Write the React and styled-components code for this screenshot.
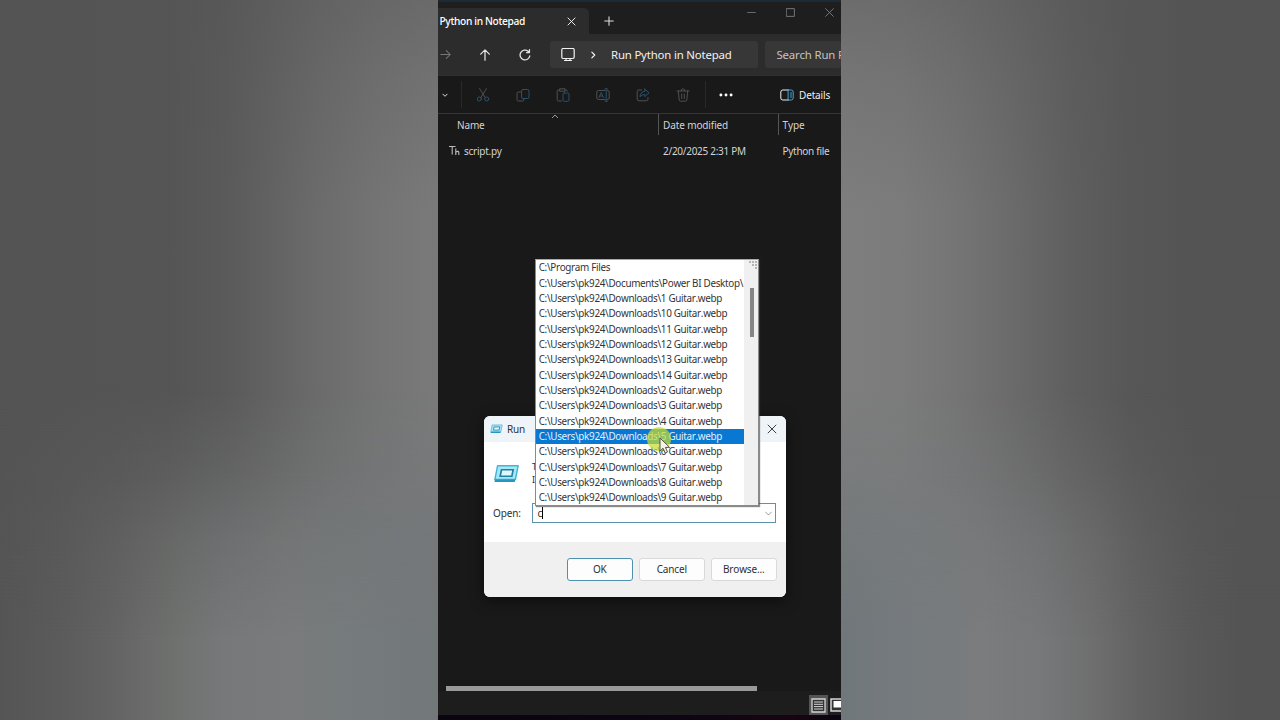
import React from 'react';
import styled, { createGlobalStyle, css } from 'styled-components';

const Global = createGlobalStyle`
  * { box-sizing: border-box; }
  body { margin: 0; background: #555; font-family: 'Noto Sans', 'Open Sans', sans-serif; font-size: 10px; font-kerning: none; overflow: hidden; }
`;

const Stage = styled.div`
  width: 1280px;
  height: 720px;
  display: flex;
  overflow: hidden;
`;

const Backdrop = styled.div`
  width: ${(p) => (p.$side === 'left' ? 438 : 439)}px;
  flex: none;
  display: flex;
  background: linear-gradient(to bottom, rgba(85, 85, 85, 0.42), rgba(85, 85, 85, 0.22) 80px, rgba(85, 85, 85, 0) 210px),
    ${(p) =>
      p.$side === 'left'
        ? 'linear-gradient(to right, #545454 0, #555 170px, #5a5a5a 225px, #616161 265px, #6b6b6b 315px, #747474 375px, #7a7a7a 438px)'
        : 'linear-gradient(to right, #7e7e7e 0, #7c7c7c 60px, #757575 115px, #6b6b6b 170px, #5f5f5f 230px, #575757 290px, #545454 350px)'};
  &::before {
    content: '';
    flex: 1;
    background: ${(p) =>
      p.$side === 'left'
        ? 'linear-gradient(to right, #555 0, #5b5b5b 60px, #646464 115px, #6f716f 175px, #77787a 225px, #7a7b7c 285px, #767b7d 340px, #72777a 438px)'
        : 'linear-gradient(to right, #70777a 0, #767b7e 80px, #7a7c7e 140px, #77787a 200px, #6f6f6f 250px, #626262 300px, #595959 350px, #545454 400px)'};
    mask-image: linear-gradient(to bottom, transparent 390px, rgba(0, 0, 0, 0.3) 470px, rgba(0, 0, 0, 0.7) 540px, #000 640px);
  }
`;

const Screen = styled.main`
  position: relative;
  width: 403px;
  height: 720px;
  flex: none;
  display: flex;
  flex-direction: column;
  overflow: hidden;
  background: #191919;
  color: #dedede;
  white-space: nowrap;
`;

const TitleBar = styled.header`
  height: 34px;
  flex: none;
  display: flex;
  align-items: flex-end;
  background: #1e1e1e;
  border-top: 2px solid #1b2a35;
`;

const Tab = styled.div`
  width: 151px;
  height: 26px;
  display: flex;
  align-items: center;
  justify-content: space-between;
  padding: 0 13px 0 1.5px;
  background: #2c2c2c;
  border-radius: 0 5px 0 0;
  color: #fff;
  font-size: 10.2px;
  font-weight: 500;
  letter-spacing: -0.34px;
`;

const NewTab = styled.div`
  width: 39px;
  height: 26px;
  display: flex;
  align-items: center;
  justify-content: center;
  color: #ddd;
`;

const WindowControls = styled.div`
  margin-left: auto;
  height: 32px;
  display: flex;
  gap: 30px;
  padding: 6px 7px 0 0;
  color: #808080;
`;

const NavBar = styled.nav`
  height: 41px;
  flex: none;
  display: flex;
  align-items: center;
  background: #2c2c2c;
  color: #e0e0e0;
`;

const NavSlot = styled.div`
  width: ${(p) => p.$w}px;
  flex: none;
  display: flex;
  justify-content: ${(p) => (p.$dim ? 'flex-start' : 'center')};
  padding-left: ${(p) => (p.$dim ? 2 : 0)}px;
  color: ${(p) => (p.$dim ? '#777' : '#e2e2e2')};
`;

const Field = styled.div`
  width: ${(p) => p.$w}px;
  height: 27px;
  margin-left: ${(p) => p.$ml}px;
  flex: none;
  display: flex;
  align-items: center;
  padding-left: ${(p) => p.$pl}px;
  gap: 14px;
  border-radius: 3px;
  background: #373737;
  color: ${(p) => (p.$dim ? '#c4c4c4' : '#f2f2f2')};
  font-size: 11.4px;
  letter-spacing: -0.18px;
`;

const CommandBar = styled.div`
  height: 39px;
  flex: none;
  display: flex;
  align-items: center;
  border-top: 1px solid #303030;
  border-bottom: 1px solid #353535;
  background: #191919;
`;

const Command = styled.div`
  width: ${(p) => p.$w || 40}px;
  flex: none;
  display: flex;
  justify-content: center;
  color: ${(p) => (p.$active ? '#fff' : '#505050')};
`;

const Divider = styled.div`
  width: 1px;
  height: 27px;
  flex: none;
  margin: 0 ${(p) => p.$after || 0}px 0 ${(p) => p.$before || 0}px;
  background: #292929;
`;

const Details = styled.div`
  display: flex;
  align-items: center;
  gap: 5px;
  margin-left: 34px;
  color: #f0f0f0;
  letter-spacing: -0.15px;
`;

const Columns = styled.div`
  height: ${(p) => (p.$head ? 21 : 31)}px;
  flex: none;
  display: grid;
  grid-template-columns: 220px 119.5px 63.5px;
  align-items: center;
  color: #d4d4d4;
  font-size: 10px;
`;

const Cell = styled.div`
  position: relative;
  height: 100%;
  display: flex;
  align-items: center;
  gap: 4px;
  padding-left: ${(p) => p.$pl}px;
  letter-spacing: ${(p) => p.$ls || 0}px;
  ${(p) => p.$line && css`border-left: 1px solid #555;`}
`;

const SortMark = styled.svg`
  position: absolute;
  left: 113px;
  top: 0;
`;

const Canvas = styled.div`
  flex: 1;
`;

const ScrollTrack = styled.div`
  height: 5px;
  flex: none;
  margin-left: 8px;
  display: flex;
  &::before {
    content: '';
    width: 311px;
    background: #999;
  }
`;

const StatusBar = styled.footer`
  height: 24px;
  flex: none;
  display: flex;
  justify-content: flex-end;
  align-items: flex-end;
  background: #1d1d1d;
`;

const DesktopEdge = styled.div`
  height: 5px;
  flex: none;
  background: linear-gradient(to right, #09040f, #0d0513 60%, #190411 88%, #0b0412);
`;

const RunDialog = styled.section`
  position: absolute;
  left: 46px;
  top: 416px;
  width: 302px;
  height: 181px;
  display: flex;
  flex-direction: column;
  border-radius: 6px;
  overflow: hidden;
  background: #fff;
  color: #303030;
  box-shadow: 0 4px 14px rgba(0, 0, 0, 0.5);
`;

const DialogTitle = styled.div`
  height: 26px;
  flex: none;
  display: flex;
  align-items: center;
  gap: 4px;
  padding: 0 9px 0 6px;
  background: #eff4f9;
  letter-spacing: -0.2px;
  & > :last-child { margin-left: auto; }
`;

const DialogBody = styled.div`
  flex: 1;
  display: flex;
  flex-direction: column;
  padding: 17px 10.5px 0 9px;
`;

const Prompt = styled.div`
  height: 44px;
  display: flex;
  gap: 12px;
  p {
    margin: 1px 0 0;
    font-size: 9.2px;
    line-height: 13px;
  }
  svg { margin-top: 5px; flex: none; }
`;

const OpenRow = styled.label`
  display: flex;
  align-items: center;
  letter-spacing: -0.15px;
`;

const ComboBox = styled.div`
  width: 244px;
  height: 20px;
  margin-left: auto;
  display: flex;
  align-items: center;
  padding: 0 3px 0 5px;
  border: 1px solid #5d92ac;
  background: #fff;
  & > svg { margin-left: auto; }
`;

const Caret = styled.span`
  width: 1px;
  height: 12px;
  background: #000;
`;

const DialogFooter = styled.div`
  height: 55px;
  flex: none;
  display: flex;
  justify-content: flex-end;
  gap: 6.500px;
  padding: 16px 9.500px 0 0;
  background: #f0f0f0;
`;

const Button = styled.button`
  width: 65.500px;
  height: 23px;
  padding: 0 0 1px;
  border: 1px solid ${(p) => (p.$primary ? '#4f8fb0' : '#d9d9d9')};
  border-radius: 3px;
  background: #fdfdfd;
  color: #303030;
  font: inherit;
  font-kerning: none;
  letter-spacing: -0.15px;
`;

const Suggestions = styled.div`
  position: absolute;
  left: 97px;
  top: 259px;
  width: 224px;
  height: 247px;
  display: flex;
  border: 1px solid #8b8b8b;
  border-top-color: #aaa;
  background: #fff;
  color: #333;
  box-shadow: 1px 1px 1px rgba(60, 60, 60, 0.6);
`;

const PathList = styled.ul`
  width: 208px;
  margin: 0;
  padding: 0.3px 0 0;
  list-style: none;
  overflow: hidden;
`;

const PathItem = styled.li`
  height: 15.330px;
  line-height: 15.330px;
  padding-left: 2.700px;
  font-size: 9.900px;
  letter-spacing: -0.320px;
  ${(p) => p.$selected && css`background: #0878d3; color: #e4f1fb;`}
`;

const ListScroll = styled.div`
  flex: 1;
  display: flex;
  flex-direction: column;
  align-items: center;
  background: #f0f0f0;
  & > svg { align-self: flex-end; }
`;

const ListThumb = styled.div`
  width: 4px;
  height: 49px;
  margin-top: 19px;
  margin-left: 1px;
  background: #858585;
`;

const Pointer = styled.div`
  position: absolute;
  left: 208px;
  top: 427px;
  width: 28px;
  height: 28px;
`;

function Glyph({ size = 14, w = 1, children, ...rest }) {
  return (
    <svg width={size} height={size} viewBox="0 0 14 14" fill="none" stroke="currentColor" strokeWidth={w} strokeLinecap="round" strokeLinejoin="round" {...rest}>
      {children}
    </svg>
  );
}

const BLUE = '#2a526a';

function RunIcon({ width, height }) {
  return (
    <svg width={width} height={height} viewBox="0 0 24 18" fill="none">
      <path d="M4 1.500H22.500L20 14H1.500Z" fill="#a5e8f7" stroke="#45b3d8" strokeWidth="1.300" strokeLinejoin="round" />
      <path d="M1.500 14H20L19.400 16.200H1.200Z" fill="#2496c2" />
      <path d="M7.500 5.200H18L16.800 11H6.300Z" fill="#e0f8fd" stroke="#257fa6" strokeWidth="1.500" />
    </svg>
  );
}

const files = ['1', '10', '11', '12', '13', '14', '2', '3', '4', '5', '6', '7', '8', '9'];

export default function App() {
  return (
    <Stage>
      <Global />
      <Backdrop $side="left" />
      <Screen>
        <TitleBar>
          <Tab>
            <span>Python in Notepad</span>
            <Glyph size={9} w={1.4}><path d="M1.5 1.5l11 11M12.5 1.5l-11 11" /></Glyph>
          </Tab>
          <NewTab><Glyph size={10} w={1.5}><path d="M7 1v12M1 7h12" /></Glyph></NewTab>
          <WindowControls>
            <Glyph size={9} w={1.2}><path d="M1 7h12" /></Glyph>
            <Glyph size={9} w={1.4}><path d="M1 1h12v12H1z" /></Glyph>
            <Glyph size={9} w={1.4}><path d="M1 1l12 12M13 1L1 13" /></Glyph>
          </WindowControls>
        </TitleBar>

        <NavBar>
          <NavSlot $w={27} $dim><Glyph size={11} w={1.3}><path d="M1 7h12M8 2l5 5-5 5" /></Glyph></NavSlot>
          <NavSlot $w={40}><Glyph size={12} w={1.5}><path d="M7 13V1M2 6l5-5 5 5" /></Glyph></NavSlot>
          <NavSlot $w={40}><Glyph size={12} w={1.5}><path d="M12.6 8A5.7 5.7 0 1 1 10.6 2.6L12 4M12.2 .8V4.2H8.8" /></Glyph></NavSlot>
          <Field $w={208} $ml={5} $pl={11}>
            <Glyph size={14} w={1.2}><path d="M2.2 .5h9.600q1.400 0 1.400 1.400v7.200q0 1.400-1.400 1.400H2.200Q.8 10.500 .8 9.100V1.900Q.8 .5 2.200 .5ZM5 10.700v1.500M9 10.700v1.500M3.500 12.500h7" /></Glyph>
            <Glyph size={8} w={2.2}><path d="M5 2l5 5-5 5" /></Glyph>
            <span>Run Python in Notepad</span>
          </Field>
          <Field $w={76} $ml={7} $pl={11.5} $dim>Search Run P</Field>
        </NavBar>

        <CommandBar>
          <Command $w={14} $active><Glyph size={6} w={2}><path d="M2 5l5 5 5-5" /></Glyph></Command>
          <Divider $before={9} $after={1} />
          <Command>
            <Glyph>
              <path d="M3.600 .6l5.500 9M10.400 .6l-5.500 9" />
              <circle cx="3.300" cy="11" r="2" stroke={BLUE} />
              <circle cx="10.700" cy="11" r="2" stroke={BLUE} />
            </Glyph>
          </Command>
          <Command>
            <Glyph>
              <path d="M4.500 4H2.500Q1 4 1 5.500v6Q1 13 2.500 13h4Q8 13 8 11.500" />
              <rect x="5.500" y="1.500" width="7.500" height="9" rx="1.500" stroke={BLUE} />
            </Glyph>
          </Command>
          <Command>
            <Glyph>
              <path d="M5.500 13H2.500Q1.200 13 1.200 11.800V3.200Q1.200 2 2.500 2H4M9 2h1.200q1 0 1 1.200M4 .8h5v2.400H4z" />
              <rect x="7" y="5" width="6" height="8.300" rx="1.200" stroke={BLUE} />
            </Glyph>
          </Command>
          <Command>
            <Glyph>
              <path d="M9 2.500H2.500Q.8 2.500.8 4v6q0 1.500 1.700 1.500H9M11.500 2.500q1.700 0 1.700 1.500v6q0 1.500-1.700 1.500" />
              <path d="M10.200 .8v12.400M9 .8h2.400M9 13.200h2.400M3 9.500L5.200 4.500 7.400 9.500M3.700 8h3" stroke={BLUE} />
            </Glyph>
          </Command>
          <Command>
            <Glyph>
              <path d="M5.500 2H3Q1.200 2 1.200 3.800v7.200Q1.200 12.800 3 12.800h7.200q1.800 0 1.800-1.800V9.500" />
              <path d="M8.800 1l4.200 3.800-4.200 3.800V6.500Q5.500 6.300 4 9 4.300 3.500 8.800 3.200Z" stroke={BLUE} />
            </Glyph>
          </Command>
          <Command>
            <Glyph><path d="M1 3h12M5 3Q5 .8 7 .8T9 3M2.300 3l.9 9q.1 1.200 1.300 1.200h5q1.200 0 1.300-1.200l.9-9M5.700 6v4.500M8.300 6v4.500" /></Glyph>
          </Command>
          <Divider $before={2} />
          <Command $active>
            <Glyph><g fill="currentColor" stroke="none"><circle cx="1.900" cy="7" r="1.450" /><circle cx="7" cy="7" r="1.450" /><circle cx="12.100" cy="7" r="1.450" /></g></Glyph>
          </Command>
          <Details>
            <Glyph>
              <path d="M8.500 2H2.800Q.8 2 .8 4v6q0 2 2 2h5.700" />
              <path d="M8.500 2h2.700q2 0 2 2v6q0 2-2 2H8.500zM10.300 5h1.300M10.300 7h1.300M10.300 9h1.300" stroke="#4aa5d6" />
            </Glyph>
            <span>Details</span>
          </Details>
        </CommandBar>

        <Columns $head>
          <Cell $pl={19} $ls={-0.15}>
            <span>Name</span>
            <SortMark width="8" height="5" viewBox="0 0 8 5" fill="none" stroke="#999"><path d="M1 4l3-3 3 3" /></SortMark>
          </Cell>
          <Cell $pl={4} $ls={-0.12} $line>Date modified</Cell>
          <Cell $pl={4} $ls={-0.1} $line>Type</Cell>
        </Columns>
        <Columns>
          <Cell $pl={11} $ls={-0.26}>
            <svg width="11" height="11" viewBox="0 0 11 11" fill="none" stroke="#bdbdbd" strokeWidth="1.100"><path d="M0 1.500h6.500M3.200 1.500v8M6.800 3.500v6.500M6.800 7q3-1.500 3 .6v2.400" /></svg>
            <span>script.py</span>
          </Cell>
          <Cell $pl={5} $ls={-0.28}>2/20/2025 2:31 PM</Cell>
          <Cell $pl={5} $ls={-0.28}>Python file</Cell>
        </Columns>

        <Canvas />
        <ScrollTrack />
        <StatusBar>
          <svg width="33" height="20" viewBox="0 0 33 20" fill="none">
            <path d="M1 0H20V20H1Z" fill="#555" />
            <path d="M4 4H17V17H4Z" fill="#333" stroke="#d5d5d5" strokeWidth="1.300" />
            <path d="M6 7h9M6 9.300h9M6 11.600h9M6 14h9" stroke="#d5d5d5" />
            <path d="M23 4H36V16H23Z" fill="#333" stroke="#d5d5d5" strokeWidth="1.500" />
            <path d="M25.500 6H34V12.500H25.500Z" fill="#fff" />
          </svg>
        </StatusBar>
        <DesktopEdge />

        <RunDialog>
          <DialogTitle>
            <RunIcon width={13} height={10} />
            <span>Run</span>
            <Glyph size={10} w={1.3}><path d="M1.500 1.500l11 11M12.500 1.500l-11 11" /></Glyph>
          </DialogTitle>
          <DialogBody>
            <Prompt>
              <RunIcon width={27} height={20} />
              <p>Type the name of a program, folder, document, or<br />Internet resource, and Windows will open it.</p>
            </Prompt>
            <OpenRow>
              <span>Open:</span>
              <ComboBox>
                <span>c</span>
                <Caret />
                <Glyph size={7} w={1.4} color="#777"><path d="M1 4l6 6 6-6" /></Glyph>
              </ComboBox>
            </OpenRow>
          </DialogBody>
          <DialogFooter>
            <Button $primary>OK</Button>
            <Button>Cancel</Button>
            <Button>Browse...</Button>
          </DialogFooter>
        </RunDialog>

        <Suggestions>
          <PathList>
            <PathItem>C:\Program Files</PathItem>
            <PathItem>{'C:\\Users\\pk924\\Documents\\Power BI Desktop\\'}</PathItem>
            {files.map((n) => (
              <PathItem key={n} $selected={n === '5'}>{`C:\\Users\\pk924\\Downloads\\${n} Guitar.webp`}</PathItem>
            ))}
          </PathList>
          <ListScroll>
            <svg width="10" height="9" viewBox="0 0 10 9" fill="#b5b5b5"><path d="M1 1h2v2H1zM4 1h2v2H4zM7 1h2v2H7zM4 4h2v2H4zM7 4h2v2H7zM7 7h2v2H7z" /></svg>
            <ListThumb />
          </ListScroll>
        </Suggestions>

        <Pointer>
          <svg width="28" height="28" viewBox="0 0 28 28">
            <circle cx="13" cy="12" r="12" fill="#c6dc32" fillOpacity="0.72" />
            <path d="M14 11V24L17 21.200L19.200 26L21.500 25L19.400 20.400H23.600Z" fill="#f4f4e0" stroke="#444" strokeWidth="0.900" />
          </svg>
        </Pointer>
      </Screen>
      <Backdrop $side="right" />
    </Stage>
  );
}
